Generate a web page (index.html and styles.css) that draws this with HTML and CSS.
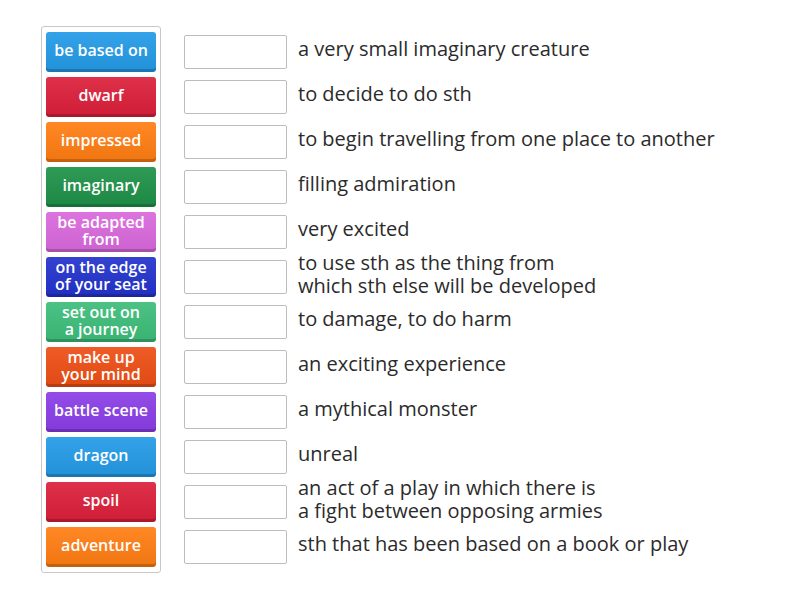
FILE: index.html
```html
<!DOCTYPE html>
<html>
<head>
<meta charset="utf-8">
<link rel="stylesheet" href="styles.css">
</head>
<body>
<div class="page">
  <div class="tiles">
    <div class="tile c-blue">be based on</div>
    <div class="tile c-red">dwarf</div>
    <div class="tile c-orange">impressed</div>
    <div class="tile c-green">imaginary</div>
    <div class="tile c-pink">be adapted from</div>
    <div class="tile c-navy">on the edge of your seat</div>
    <div class="tile c-sea">set out on<br>a journey</div>
    <div class="tile c-redorange">make up your mind</div>
    <div class="tile c-purple">battle scene</div>
    <div class="tile c-blue">dragon</div>
    <div class="tile c-red">spoil</div>
    <div class="tile c-orange">adventure</div>
  </div>
  <div class="rows">
    <div class="row"><div class="slot"></div><div class="def">a very small imaginary creature</div></div>
    <div class="row"><div class="slot"></div><div class="def">to decide to do sth</div></div>
    <div class="row"><div class="slot"></div><div class="def">to begin travelling from one place to another</div></div>
    <div class="row"><div class="slot"></div><div class="def">filling admiration</div></div>
    <div class="row"><div class="slot"></div><div class="def">very excited</div></div>
    <div class="row"><div class="slot"></div><div class="def">to use sth as the thing from<br>which sth else will be developed</div></div>
    <div class="row"><div class="slot"></div><div class="def">to damage, to do harm</div></div>
    <div class="row"><div class="slot"></div><div class="def">an exciting experience</div></div>
    <div class="row"><div class="slot"></div><div class="def">a mythical monster</div></div>
    <div class="row"><div class="slot"></div><div class="def">unreal</div></div>
    <div class="row"><div class="slot"></div><div class="def">an act of a play in which there is<br>a fight between opposing armies</div></div>
    <div class="row"><div class="slot"></div><div class="def">sth that has been based on a book or play</div></div>
  </div>
</div>
</body>
</html>
```
FILE: styles.css
```css
html, body {
  margin: 0;
  padding: 0;
  background: #fff;
}
.page {
  display: flex;
  align-items: flex-start;
  padding: 26px 0 0 41px;
}
.tiles {
  display: flex;
  flex-direction: column;
  gap: 5px;
  padding: 5px 4px;
  border: 1px solid #c8c8c8;
  border-radius: 3px;
}
.tile {
  width: 110px;
  height: 40px;
  box-sizing: border-box;
  border-radius: 3px;
  display: flex;
  align-items: center;
  justify-content: center;
  text-align: center;
  color: #fff;
  font-family: "Open Sans", sans-serif;
  font-weight: 600;
  font-size: 16px;
  line-height: 17px;
  padding: 0 5px 3px;
  box-shadow: inset 0 -3px 0 rgba(0,0,0,0.18);
  background-image: linear-gradient(to bottom, rgba(255,255,255,0.08), rgba(0,0,0,0.06));
}
.c-blue { background-color: #239ae6; }
.c-red { background-color: #dc1f3a; }
.c-orange { background-color: #ff7d12; }
.c-green { background-color: #1e9148; }
.c-pink { background-color: #d968dc; }
.c-navy { background-color: #2232cc; }
.c-sea { background-color: #3cbd79; }
.c-redorange { background-color: #ee4e14; }
.c-purple { background-color: #8a3de6; }
.rows {
  display: flex;
  flex-direction: column;
  gap: 5px;
  padding-top: 6px;
  margin-left: 23px;
}
.row {
  height: 40px;
  display: flex;
  align-items: center;
}
.slot {
  width: 103px;
  height: 34px;
  box-sizing: border-box;
  border: 1px solid #bdbdbd;
  border-radius: 2px;
  background: #fff;
  flex: none;
}
.def {
  margin-left: 11px;
  font-family: "Open Sans", sans-serif;
  font-size: 20px;
  line-height: 23px;
  color: #2b2b2b;
  margin-top: -7px;
  white-space: nowrap;
}
```
